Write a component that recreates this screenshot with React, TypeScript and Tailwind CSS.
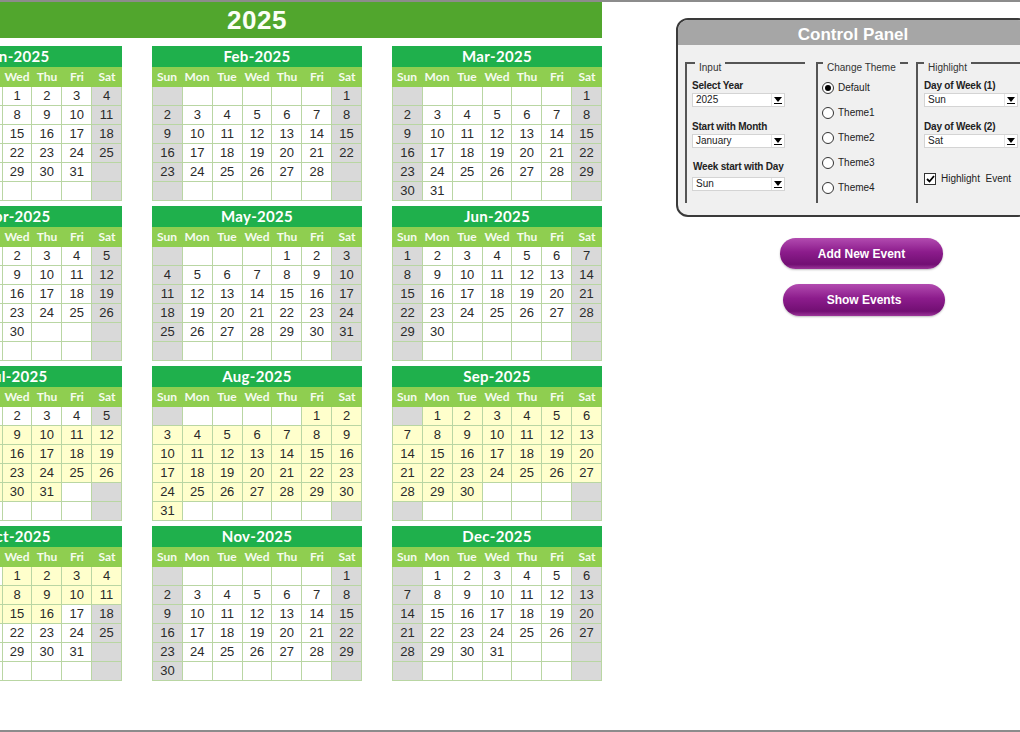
import React from "react";

const MONTHS = ["Jan", "Feb", "Mar", "Apr", "May", "Jun", "Jul", "Aug", "Sep", "Oct", "Nov", "Dec"];
const DAYS = ["Sun", "Mon", "Tue", "Wed", "Thu", "Fri", "Sat"];

function isHighlighted(m: number, d: number) {
  const v = m * 100 + d;
  return v >= 607 && v <= 916;
}

function Month({ m }: { m: number }) {
  const first = new Date(2025, m, 1).getDay();
  const dim = new Date(2025, m + 1, 0).getDate();
  const cells: React.ReactNode[] = [];
  for (let i = 0; i < 42; i++) {
    const d = i - first + 1;
    const valid = d >= 1 && d <= dim;
    const col = i % 7;
    const weekend = col === 0 || col === 6;
    let bg = "bg-white";
    if (valid && isHighlighted(m, d)) bg = "bg-[#ffffcc]";
    else if (weekend) bg = "bg-[#d9d9d9]";
    cells.push(
      <div
        key={i}
        className={`h-[19px] border-r border-b border-[#b9d6a3] flex items-center justify-center ${bg}`}
      >
        {valid ? d : ""}
      </div>
    );
  }
  return (
    <div className="w-[210px]">
      <div className="h-[21px] bg-[#1fb04c] text-white font-bold text-[15px] flex items-center justify-center font-['Lato',sans-serif] tracking-[0.3px]">
        {MONTHS[m]}-2025
      </div>
      <div className="h-[20px] bg-[#8fce50] grid grid-cols-7 text-[#f6fbef] font-bold text-[12px] font-['Lato',sans-serif]">
        {DAYS.map((d) => (
          <div key={d} className="flex items-center justify-center">
            {d}
          </div>
        ))}
      </div>
      <div className="grid grid-cols-7 border-l border-[#b9d6a3] text-[13px] text-[#2a2a2a] font-['Liberation_Sans',Arial,sans-serif]">
        {cells}
      </div>
    </div>
  );
}

function Arrow() {
  return (
    <div className="w-[13px] h-full flex flex-col items-center justify-center gap-[1px] border-l border-[#e4e4e4]">
      <svg width="8" height="5" viewBox="0 0 8 5">
        <path d="M0 0h8L4 5z" fill="#000" />
      </svg>
      <div className="w-[8px] h-[1px] bg-black" />
    </div>
  );
}

function Dropdown({ value, w }: { value: string; w: string }) {
  return (
    <div className={`h-[14px] ${w} bg-white border border-[#d4d4d4] flex items-center`}>
      <span className="flex-1 pl-[3px] text-[10px] leading-none text-[#222]">{value}</span>
      <Arrow />
    </div>
  );
}

function Radio({ label, checked }: { label: string; checked?: boolean }) {
  return (
    <div className="h-[25px] flex items-center pl-[4px]">
      <div className="w-[12px] h-[12px] rounded-full border border-[#333] bg-white flex items-center justify-center">
        {checked ? <div className="w-[6px] h-[6px] rounded-full bg-black" /> : null}
      </div>
      <span className="ml-[4px] text-[10px] text-[#222]">{label}</span>
    </div>
  );
}

export default function App() {
  return (
    <div className="w-[1020px] h-[732px] overflow-hidden bg-white border-t-2 border-b-2 border-[#8c8c8c] flex font-['Liberation_Sans',Arial,sans-serif]">
      <div className="ml-[-88px] w-[690px] shrink-0 flex flex-col">
        <div className="h-[36px] bg-[#51a62d] flex items-center justify-center text-[#fbfff6] font-bold text-[26px] tracking-[0.5px]">
          2025
        </div>
        <div className="mt-[8px] grid grid-cols-[210px_210px_210px] gap-x-[30px] gap-y-[5px]">
          {MONTHS.map((_, i) => (
            <Month key={i} m={i} />
          ))}
        </div>
      </div>

      <div className="ml-[74px] shrink-0 w-[354px] pt-[16px] flex flex-col">
        <div className="h-[199px] border-2 border-[#3a3a3a] rounded-[12px] overflow-hidden bg-[#f0f0f0] flex flex-col">
          <div className="h-[25px] pt-[5px] bg-[#a6a6a6] flex items-center justify-center text-white font-bold text-[17px]">
            Control Panel
          </div>
          <div className="flex pl-[7px] pt-[7px] text-[#222]">
            <fieldset className="border-t-2 border-l-2 border-[#555] w-[120px]">
              <legend className="ml-[8px] px-[4px] pt-[10px] text-[10px] leading-[12px] text-[#333]">Input</legend>
              <div className="h-[129px] pl-[5px] flex flex-col">
                <div className="mt-[6px] text-[10px] leading-[12px] font-bold tracking-[-0.2px]">Select Year</div>
                <div className="mt-[1px]">
                  <Dropdown value="2025" w="w-[93px]" />
                </div>
                <div className="mt-[14px] text-[10px] leading-[12px] font-bold tracking-[-0.2px]">Start with Month</div>
                <div className="mt-[1px]">
                  <Dropdown value="January" w="w-[93px]" />
                </div>
                <div className="mt-[13px] pl-[1px] text-[10px] leading-[12px] font-bold tracking-[-0.2px]">Week start with Day</div>
                <div className="mt-[4px]">
                  <Dropdown value="Sun" w="w-[93px]" />
                </div>
              </div>
            </fieldset>
            <fieldset className="ml-[11px] border-t-2 border-l-2 border-[#555] w-[92px]">
              <legend className="ml-[5px] px-[4px] pt-[10px] text-[10px] leading-[12px] text-[#333]">Change Theme</legend>
              <div className="h-[129px] flex flex-col pt-[1px]">
                <Radio label="Default" checked />
                <Radio label="Theme1" />
                <Radio label="Theme2" />
                <Radio label="Theme3" />
                <Radio label="Theme4" />
              </div>
            </fieldset>
            <fieldset className="ml-[8px] border-t-2 border-l-2 border-[#555] w-[112px]">
              <legend className="ml-[6px] px-[4px] pt-[10px] text-[10px] leading-[12px] text-[#333]">Highlight</legend>
              <div className="h-[129px] pl-[6px] flex flex-col">
                <div className="mt-[6px] text-[10px] leading-[12px] font-bold tracking-[-0.2px]">Day of Week (1)</div>
                <div className="mt-[1px]">
                  <Dropdown value="Sun" w="w-[94px]" />
                </div>
                <div className="mt-[14px] text-[10px] leading-[12px] font-bold tracking-[-0.2px]">Day of Week (2)</div>
                <div className="mt-[1px]">
                  <Dropdown value="Sat" w="w-[94px]" />
                </div>
                <div className="mt-[23px] flex items-center">
                  <div className="w-[12px] h-[12px] border border-[#333] bg-white flex items-center justify-center">
                    <svg width="9" height="8" viewBox="0 0 9 8">
                      <path d="M1 4l2.5 2.5L8 1" stroke="#000" strokeWidth="1.8" fill="none" />
                    </svg>
                  </div>
                  <span className="ml-[5px] text-[10px] whitespace-pre">Highlight  Event</span>
                </div>
              </div>
            </fieldset>
          </div>
        </div>

        <div className="ml-[104px] mt-[21px] w-[163px] h-[31px] rounded-full bg-[linear-gradient(180deg,#b24bb0_0%,#8c1c8c_45%,#720f73_85%,#9b3599_100%)] text-white font-bold text-[12px] flex items-center justify-center shadow-[0_1px_2px_rgba(0,0,0,0.25)]">
          Add New Event
        </div>
        <div className="ml-[107px] mt-[15px] w-[162px] h-[32px] rounded-full bg-[linear-gradient(180deg,#b24bb0_0%,#8c1c8c_45%,#720f73_85%,#9b3599_100%)] text-white font-bold text-[12px] flex items-center justify-center shadow-[0_1px_2px_rgba(0,0,0,0.25)]">
          Show Events
        </div>
      </div>
    </div>
  );
}
